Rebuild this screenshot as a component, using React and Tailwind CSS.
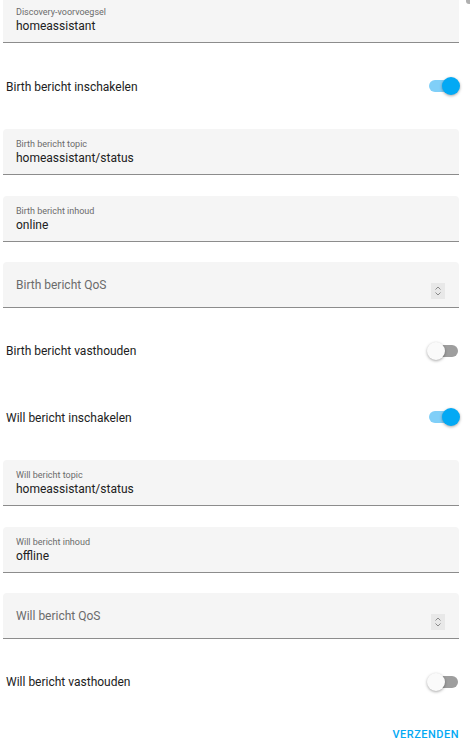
import React from "react";

function Field({ label, value }) {
  return (
    <div className="h-[46px] bg-[#f5f5f5] rounded-t-[4px] border-b border-[#8c8c8c] relative pl-[13px]">
      <div className="pt-[10px] text-[9px] leading-[11px] text-[#6b6b6b]">{label}</div>
      <div className="mt-[0px] text-[12px] leading-[16px] text-[#212121]">{value}</div>
    </div>
  );
}

function NumberField({ label }) {
  return (
    <div className="h-[46px] bg-[#f5f5f5] rounded-t-[4px] border-b border-[#8c8c8c] flex items-start justify-between pl-[13px] pr-[14px]">
      <div className="pt-[15px] text-[12px] leading-[16px] text-[#6b6b6b]">{label}</div>
      <div className="mt-[21px] w-[14px] h-[16px] bg-[#e8e8e8] flex items-center justify-center">
        <svg width="8" height="12" viewBox="0 0 8 12" fill="none" stroke="#8a8a8a" strokeWidth="1">
          <path d="M1.5 4.5 L4 2 L6.5 4.5" />
          <path d="M1.5 7.5 L4 10 L6.5 7.5" />
        </svg>
      </div>
    </div>
  );
}

function Toggle({ label, on }) {
  return (
    <div className="h-[46px] flex items-center justify-between pl-[3px]">
      <span className="text-[12px] leading-[16px] pt-[1px] text-[#212121]">{label}</span>
      <div className="relative w-[30px] h-[18px] flex items-center">
        <div className={"w-[29px] h-[12px] rounded-full " + (on ? "bg-[#80cff8]" : "bg-[#9e9e9e]")} />
        {on ? (
          <div className="absolute right-[-1px] top-0 w-[18px] h-[18px] rounded-full bg-[#03a9f4] shadow-[0_1px_3px_rgba(0,0,0,0.35)]" />
        ) : (
          <div className="absolute left-[-2px] top-0 w-[18px] h-[18px] rounded-full bg-[#fafafa] shadow-[0_1px_3px_rgba(0,0,0,0.35)]" />
        )}
      </div>
    </div>
  );
}

export default function App() {
  return (
    <div className="w-[471px] h-[750px] bg-white overflow-hidden relative" style={{ fontFamily: "Roboto, 'Noto Sans', sans-serif" }}>
      <div className="absolute right-[1px] top-0 w-[4px] h-[4px] bg-[#b0b0b0] rounded-bl-[3px]" />
      <div className="mt-[-3px] pl-[3px] pr-[12px] flex flex-col gap-[20.2px]">
        <Field label="Discovery-voorvoegsel" value="homeassistant" />
        <Toggle label="Birth bericht inschakelen" on />
        <Field label="Birth bericht topic" value="homeassistant/status" />
        <Field label="Birth bericht inhoud" value="online" />
        <NumberField label="Birth bericht QoS" />
        <Toggle label="Birth bericht vasthouden" on={false} />
        <Toggle label="Will bericht inschakelen" on />
        <Field label="Will bericht topic" value="homeassistant/status" />
        <Field label="Will bericht inhoud" value="offline" />
        <NumberField label="Will bericht QoS" />
        <Toggle label="Will bericht vasthouden" on={false} />
        <div className="flex justify-end mt-[3px]">
          <span className="text-[11px] leading-[14px] font-medium tracking-[0.5px] text-[#03a9f4]">VERZENDEN</span>
        </div>
      </div>
    </div>
  );
}
